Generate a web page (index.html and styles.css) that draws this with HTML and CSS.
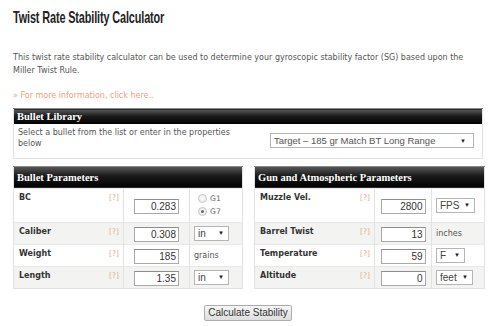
FILE: index.html
```html
<!DOCTYPE html>
<html>
<head>
<meta charset="utf-8">
<link rel="stylesheet" href="styles.css">
</head>
<body>
<div class="page">
  <h1 class="title"><span class="title-text">Twist Rate Stability Calculator</span></h1>
  <p class="intro">This twist rate stability calculator can be used to determine your gyroscopic stability factor (SG) based upon the Miller Twist Rule.</p>
  <p class="more"><a href="#">» For more information, click here..</a></p>

  <table class="lib">
    <tr><th colspan="2" class="head">Bullet Library</th></tr>
    <tr class="lib-row">
      <td class="lib-text">Select a bullet from the list or enter in the properties below</td>
      <td class="lib-sel"><div class="sel sel-wide"><span>Target – 185 gr Match BT Long Range</span><span class="arr">▼</span></div></td>
    </tr>
  </table>

  <div class="params">
    <table class="ptab">
      <colgroup><col class="c-lab"><col class="c-in"><col class="c-unit"></colgroup>
      <tr><th colspan="3" class="head">Bullet Parameters</th></tr>
      <tr class="tall">
        <td class="lab"><div class="lab-in"><b>BC</b><span class="q">[?]</span></div></td>
        <td class="inp"><div class="box">0.283</div></td>
        <td class="unit">
          <div class="radio"><span class="rb"></span>G1</div>
          <div class="radio"><span class="rb on"></span>G7</div>
        </td>
      </tr>
      <tr class="alt">
        <td class="lab"><div class="lab-in"><b>Caliber</b><span class="q">[?]</span></div></td>
        <td class="inp"><div class="box">0.308</div></td>
        <td class="unit"><div class="sel sel-in"><span>in</span><span class="arr">▼</span></div></td>
      </tr>
      <tr>
        <td class="lab"><div class="lab-in"><b>Weight</b><span class="q">[?]</span></div></td>
        <td class="inp"><div class="box">185</div></td>
        <td class="unit"><div class="utext">grains</div></td>
      </tr>
      <tr class="alt">
        <td class="lab"><div class="lab-in"><b>Length</b><span class="q">[?]</span></div></td>
        <td class="inp"><div class="box">1.35</div></td>
        <td class="unit"><div class="sel sel-in"><span>in</span><span class="arr">▼</span></div></td>
      </tr>
    </table>

    <table class="ptab right">
      <colgroup><col class="c-lab2"><col class="c-in2"><col class="c-unit2"></colgroup>
      <tr><th colspan="3" class="head">Gun and Atmospheric Parameters</th></tr>
      <tr class="tall">
        <td class="lab"><div class="lab-in"><b>Muzzle Vel.</b><span class="q">[?]</span></div></td>
        <td class="inp"><div class="box">2800</div></td>
        <td class="unit"><div class="sel sel-fps"><span>FPS</span><span class="arr">▼</span></div></td>
      </tr>
      <tr class="alt">
        <td class="lab"><div class="lab-in"><b>Barrel Twist</b><span class="q">[?]</span></div></td>
        <td class="inp"><div class="box">13</div></td>
        <td class="unit"><div class="utext">inches</div></td>
      </tr>
      <tr>
        <td class="lab"><div class="lab-in"><b>Temperature</b><span class="q">[?]</span></div></td>
        <td class="inp"><div class="box">59</div></td>
        <td class="unit"><div class="sel sel-f"><span>F</span><span class="arr">▼</span></div></td>
      </tr>
      <tr class="alt">
        <td class="lab"><div class="lab-in"><b>Altitude</b><span class="q">[?]</span></div></td>
        <td class="inp"><div class="box">0</div></td>
        <td class="unit"><div class="sel sel-feet"><span>feet</span><span class="arr">▼</span></div></td>
      </tr>
    </table>
  </div>

  <div class="actions"><button class="btn">Calculate Stability</button></div>
</div>
</body>
</html>
```

FILE: styles.css
```css
html, body { margin: 0; padding: 0; background: #fff; }
body { font-family: "DejaVu Sans", Verdana, sans-serif; color: #555; }
.page { width: 470px; padding: 7px 0 0 13px; }

.title { margin: 0; height: 20px; line-height: 20px; font-size: 17px; white-space: nowrap; }
.title-text {
  display: inline-block;
  font-family: "Liberation Sans", Arial, sans-serif;
  font-weight: bold; color: #222;
  transform: scaleX(0.64); transform-origin: left center;
  letter-spacing: -0.2px;
}

.intro { margin: 24px 0 0 0; font-size: 8px; line-height: 13px; color: #555; }
.more { margin: 12px 0 0 0; font-size: 8px; line-height: 13px; }
.more a { color: #e9a27c; text-decoration: none; }

table { border-collapse: collapse; border-spacing: 0; }
.head {
  height: 15px; padding: 0 0 0 3px; text-align: left;
  font-family: "Liberation Serif", "Times New Roman", serif;
  font-weight: bold; font-size: 10.5px; color: #fff;
  background: linear-gradient(#5a5a5a, #1a1a1a 45%, #000);
  border-top: 1px solid #888;
}

.lib { width: 470px; margin-top: 6px; border: 1px solid #e2e2e2; border-top: 0; }
.lib-row { height: 34px; }
.lib-text { width: 230px; padding: 3px 12px 0 4px; font-size: 8px; line-height: 11px; color: #555; vertical-align: top; }
.lib-sel { padding: 9px 0 0 10px; vertical-align: top; }

.params { display: flex; gap: 11px; margin-top: 7px; }
.ptab { width: 229px; table-layout: fixed; border: 1px solid #e2e2e2; border-top: 0; }
.ptab.right { width: 230px; }
.c-lab { width: 110px; } .c-in { width: 66px; } .c-unit { width: 53px; }
.c-lab2 { width: 120px; } .c-in2 { width: 57px; } .c-unit2 { width: 53px; }
.ptab .head { height: 16px; }
.ptab tr { height: 22px; }
.ptab tr.tall { height: 34px; }
.ptab td { border-left: 1px solid #e2e2e2; border-top: 1px solid #e8e8e8; padding: 0; }
.ptab tr.alt td { background: #f3f3f1; }

.lab { vertical-align: top; }
.lab-in { display: flex; justify-content: space-between; padding: 4px 4px 0 5px; }
.lab b { font-size: 8px; color: #333; font-weight: bold; }
.q { font-size: 7.6px; color: #e5ad8e; }

.inp { text-align: center; vertical-align: middle; }
.box {
  display: inline-block; box-sizing: border-box; width: 45px; height: 15px; vertical-align: middle;
  border: 1px solid #a9a9a9; border-top-color: #8d8d8d; background: #fff;
  font-family: "Liberation Sans", Arial, sans-serif; font-size: 10px; line-height: 13px;
  color: #333; text-align: right; padding-right: 2px;
}

.unit { vertical-align: middle; padding-left: 4px !important; }
.utext { font-size: 8px; line-height: 15px; color: #555; }
.radio { display: flex; align-items: center; gap: 3px; font-size: 7.6px; color: #666; height: 13px; padding-left: 4px; }
.rb { width: 7px; height: 7px; border-radius: 50%; border: 1px solid #c8c8c8; background: radial-gradient(#fff, #e4e4e4); position: relative; }
.rb.on::after { content: ""; position: absolute; left: 2px; top: 2px; width: 3px; height: 3px; border-radius: 50%; background: #666; }

.sel {
  display: flex; justify-content: space-between; align-items: center; box-sizing: border-box;
  height: 15px; border: 1px solid #b5b5b5; background: #fff; padding: 0 4px 0 3px;
  font-family: "Liberation Sans", Arial, sans-serif; font-size: 10px; color: #444;
}
.arr { font-size: 6px; color: #222; }
.sel-wide { width: 204px; height: 15px; font-size: 9.5px; color: #555; padding-left: 3px; padding-right: 7px; }
.sel-in { width: 35px; }
.sel-fps { width: 39px; }
.sel-f { width: 29px; }
.sel-feet { width: 37px; }

.actions { display: flex; justify-content: center; margin-top: 16px; }
.btn {
  width: 88px; height: 16px; padding: 0;
  font-family: "Liberation Sans", Arial, sans-serif; font-size: 10px; color: #333;
  border: 1px solid #acacac; border-radius: 2px;
  background: linear-gradient(#f6f6f6, #dedede);
}
```
